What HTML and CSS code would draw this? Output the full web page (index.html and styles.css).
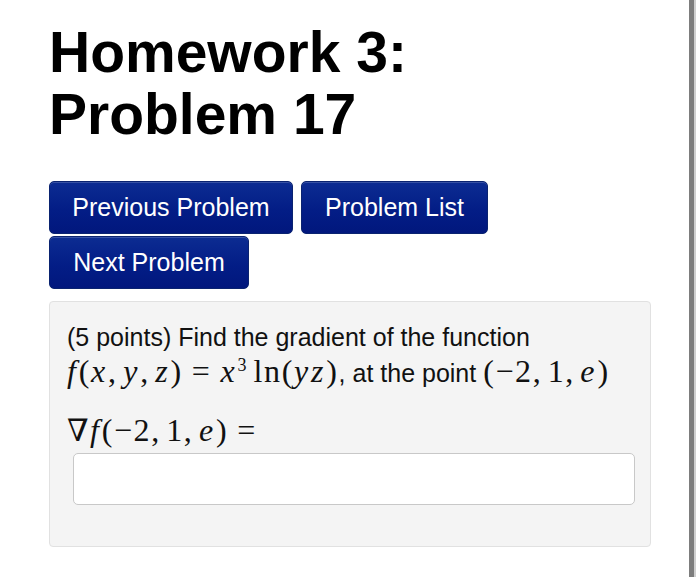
FILE: index.html
```html
<!DOCTYPE html>
<html>
<head>
<meta charset="utf-8">
<link rel="stylesheet" href="styles.css">
</head>
<body>
<div class="page">
  <main class="content">
    <h1 class="title">Homework 3:<br>Problem 17</h1>
    <nav class="nav">
      <a class="btn btn-prev">Previous Problem</a>
      <a class="btn btn-list">Problem List</a>
      <a class="btn btn-next">Next Problem</a>
    </nav>
    <section class="panel">
      <p class="q">(5 points) Find the gradient of the function</p>
      <p class="q q-math"><span class="m"><i>f</i>(<i>x</i><span class="c">,</span><i>y</i><span class="c">,</span><i>z</i>)<span class="rel">=</span><i>x</i><sup>3</sup><span class="fn">ln</span>(<i>y</i><i>z</i>)</span>, at the point <span class="m">(−2<span class="c">,</span>1<span class="c">,</span><i>e</i>)</span></p>
      <p class="q q-grad"><span class="m"><span class="nabla">∇</span><i>f</i>(−2<span class="c">,</span>1<span class="c">,</span><i>e</i>)<span class="rel">=</span></span></p>
      <div class="answer"></div>
    </section>
  </main>
  <div class="scrollbar"></div>
</div>
</body>
</html>
```
FILE: styles.css
```css
html, body {
  margin: 0;
  padding: 0;
  background: #ffffff;
}
body {
  font-family: "Liberation Sans", Arial, sans-serif;
  color: #111;
}
.page {
  display: flex;
  width: 700px;
  height: 577px;
  overflow: hidden;
}
.content {
  flex: 1;
  padding: 0 0 0 49px;
}
.title {
  margin: 0;
  padding-top: 21px;
  font-size: 57px;
  line-height: 62px;
  font-weight: bold;
  color: #000;
}
.nav {
  margin-top: 36px;
  display: flex;
  flex-wrap: wrap;
  width: 460px;
  column-gap: 8px;
  row-gap: 2px;
}
.btn {
  display: block;
  box-sizing: border-box;
  height: 53px;
  line-height: 51px;
  padding: 0;
  text-align: center;
  white-space: nowrap;
  color: #fff;
  font-size: 25px;
  border-radius: 5px;
  background: linear-gradient(#0c2c92, #031d86 55%, #01177d);
  border: 1px solid #0a2370;
  box-shadow: inset 0 1px 0 rgba(255,255,255,0.18);
}
.btn-prev { width: 244px; }
.btn-list { width: 187px; }
.btn-next { width: 200px; }
.panel {
  margin-top: 12px;
  width: 602px;
  height: 246px;
  box-sizing: border-box;
  background: #f4f4f4;
  border: 1px solid #e1e1e1;
  border-radius: 4px;
  padding: 19px 0 0 17px;
}
.q {
  margin: 0;
  font-size: 25px;
  line-height: 32px;
  color: #111;
}
.q-math {
  line-height: 36px;
}
.m {
  font-family: "Liberation Serif", "Times New Roman", serif;
  font-size: 32px;
  letter-spacing: 0.05em;
}
.m i {
  margin-right: 0.04em;
}
.nabla {
  font-family: "DejaVu Serif", serif;
  font-size: 31px;
  letter-spacing: 0;
  margin-right: 0.04em;
}
.c {
  margin-right: 0.17em;
}
.rel {
  margin: 0 0.28em;
}
.fn {
  margin-left: 0.17em;
}
.m sup {
  font-size: 18px;
  vertical-align: 11px;
  line-height: 0;
}
.q-grad {
  margin-top: 21px;
  line-height: 36px;
}
.answer {
  margin: 3px 0 0 6px;
  width: 562px;
  height: 52px;
  box-sizing: border-box;
  background: #fff;
  border: 1px solid #c8c8c8;
  border-radius: 5px;
}
.scrollbar {
  width: 5px;
  margin-right: 4px;
  background: #7d7d7d;
  border-right: 2px solid #cfcfcf;
}
```
